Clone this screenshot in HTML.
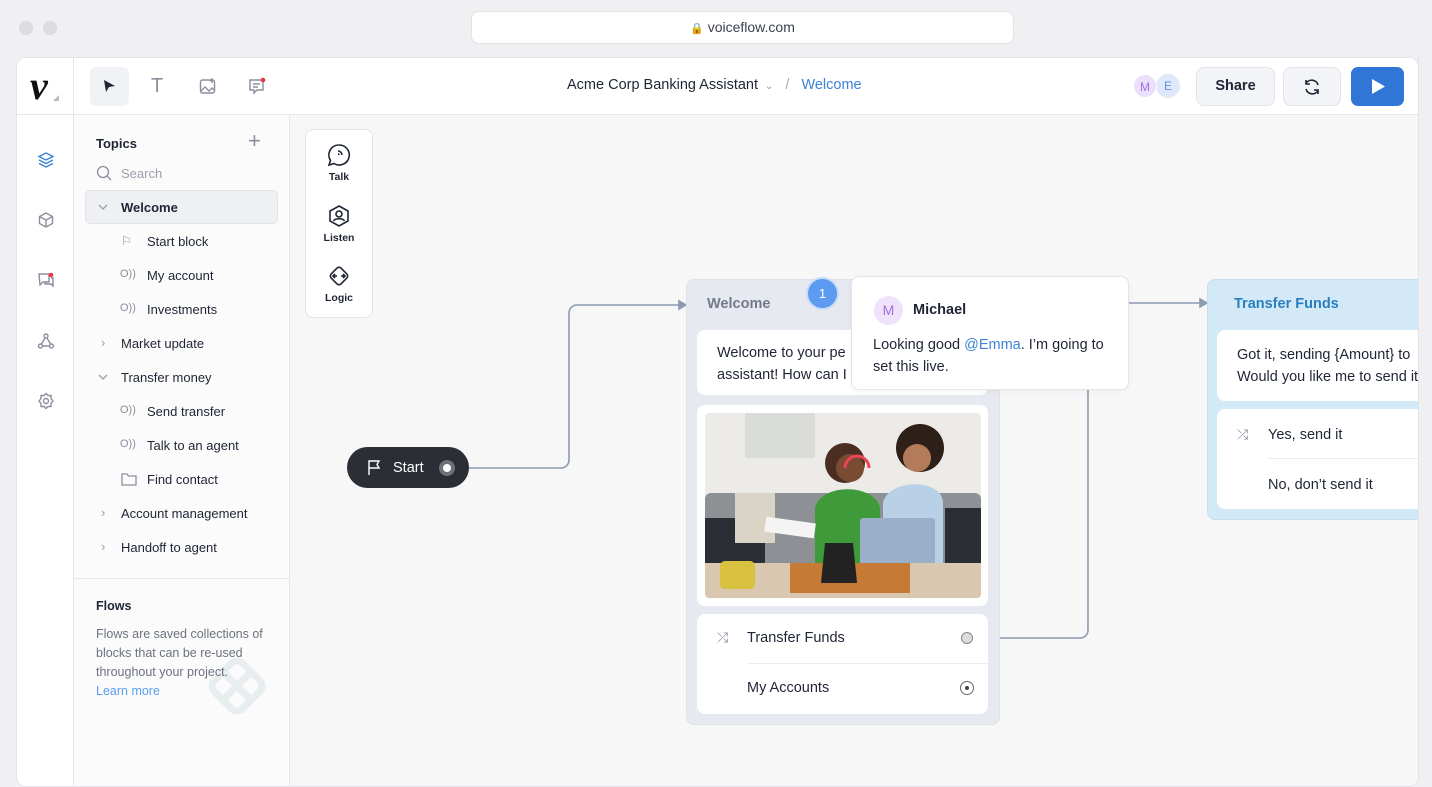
<!DOCTYPE html>
<html><head><meta charset="utf-8"><style>
*{box-sizing:border-box;margin:0;padding:0}
body{width:1432px;height:771px;overflow:hidden;background:#f0f0f3;font-family:"Liberation Sans",sans-serif;color:#1f2535;position:relative}
.abs{position:absolute}
.url{left:471px;top:11px;width:543px;height:33px;background:#fff;border:1px solid #e2e3e8;border-radius:8px;text-align:center;font-size:14px;line-height:31px;color:#3d4250}
.win{left:16px;top:57px;width:1403px;height:730px;background:#f7f7f8;border:1px solid #e4e5ea;border-radius:10px;overflow:hidden}
.hdr{left:0;top:0;width:1403px;height:57px;background:#fff;border-bottom:1px solid #e6e7ec}
.rail{left:0;top:57px;width:57px;height:700px;background:#fff;border-right:1px solid #e6e7ec}
.side{left:57px;top:57px;width:216px;height:700px;background:#fbfbfc;border-right:1px solid #e6e7ec}
.si{position:absolute;font-size:13px;color:#1f2535}
.card{background:#fff;border-radius:8px;position:absolute}
.t14{font-size:14.5px;line-height:22px;color:#1f2535}
</style></head><body>
<div class="abs" style="left:19px;top:21px;width:14px;height:14px;border-radius:50%;background:#dcdde2"></div>
<div class="abs" style="left:43px;top:21px;width:14px;height:14px;border-radius:50%;background:#dcdde2"></div>
<div class="abs url"><span style="font-size:11px;color:#888">🔒</span> voiceflow.com</div>
<div class="abs win">
 <div class="abs hdr">
  <div class="abs" style="left:13px;top:4px;font-family:'Liberation Serif',serif;font-style:italic;font-weight:bold;font-size:40px;color:#111">v</div>
  <div class="abs" style="left:36px;top:37px;width:0;height:0;border-left:6px solid transparent;border-bottom:6px solid #bbb"></div>
  <div class="abs" style="left:56px;top:0;width:1px;height:57px;background:#e6e7ec"></div>
  <div class="abs" style="left:73px;top:9px;width:39px;height:39px;border-radius:6px;background:#f1f2f5"></div>
  <svg class="abs" style="left:84px;top:20px" width="16" height="16"><path d="M3 2L14 8L8 9L5 14Z" fill="#1f2535"/></svg>
  <div class="abs" style="left:134px;top:17px;font-size:20px;color:#8a8f9c">T</div>
  <svg class="abs" style="left:182px;top:19px" width="18" height="18" fill="none" stroke="#8a8f9c" stroke-width="1.4"><rect x="1.5" y="3" width="14" height="13" rx="2"/><path d="M2 14l4-4 4 4 3-3 3 3"/><path d="M13 1v5M10.5 3.5h5"/></svg>
  <svg class="abs" style="left:231px;top:19px" width="18" height="18" fill="none" stroke="#8a8f9c" stroke-width="1.4"><path d="M2 3h13v10H9l-3 3v-3H2z"/><path d="M5 7h7M5 10h5"/><circle cx="15" cy="3" r="2.3" fill="#e8364f" stroke="none"/></svg>
  <div class="abs" style="left:550px;top:19px;font-size:14.5px;color:#1f2535">Acme Corp Banking Assistant <span style="color:#999;font-size:10px">&nbsp;⌄</span> &nbsp;&nbsp;<span style="color:#aab">/</span>&nbsp;&nbsp; <span style="color:#3c83d8">Welcome</span></div>
  <div class="abs" style="left:1139px;top:16px;width:24px;height:24px;border-radius:50%;background:#dfe9fb;color:#6a8fdc;font-size:12px;text-align:center;line-height:24px">E</div>
  <div class="abs" style="left:1116px;top:16px;width:24px;height:24px;border-radius:50%;background:#ecdffb;color:#a070e0;font-size:12px;text-align:center;line-height:24px;border:1px solid #fff">M</div>
  <div class="abs" style="left:1179px;top:9px;width:79px;height:39px;border-radius:8px;background:#f3f4f7;border:1px solid #e2e4ea;text-align:center;line-height:37px;font-size:14.5px;font-weight:bold;color:#1f2535">Share</div>
  <div class="abs" style="left:1266px;top:9px;width:58px;height:39px;border-radius:8px;background:#f3f4f7;border:1px solid #e2e4ea"></div>
  <svg class="abs" style="left:1285px;top:19px" width="20" height="20" fill="none" stroke="#1f2535" stroke-width="1.6"><path d="M16 8A6.5 6.5 0 0 0 4 6.5M4 12a6.5 6.5 0 0 0 12 1.5"/><path d="M4 3v4h4M16 17v-4h-4"/></svg>
  <div class="abs" style="left:1334px;top:9px;width:53px;height:39px;border-radius:7px;background:#2f76d6"></div>
  <svg class="abs" style="left:1353px;top:20px" width="16" height="17"><path d="M2 1L15 8.5L2 16Z" fill="#fff"/></svg>
 </div>
 <div class="abs rail">
  <svg class="abs" style="left:20px;top:36px" width="18" height="18" fill="none" stroke="#3c83d8" stroke-width="1.4"><path d="M9 2l7 3.5-7 3.5-7-3.5z"/><path d="M2 9l7 3.5L16 9M2 12.5l7 3.5 7-3.5"/></svg>
  <svg class="abs" style="left:20px;top:96px" width="18" height="18" fill="none" stroke="#8a8f9c" stroke-width="1.4"><path d="M9 2l6.5 3.5v7L9 16l-6.5-3.5v-7z"/><path d="M2.5 5.5L9 9l6.5-3.5M9 9v7"/></svg>
  <svg class="abs" style="left:20px;top:156px" width="18" height="18" fill="none" stroke="#8a8f9c" stroke-width="1.4"><path d="M2 3h10v8H6l-3 3z"/><path d="M14 7h2v8l-2-2H8v-2"/><circle cx="14" cy="4" r="2.3" fill="#e8364f" stroke="none"/></svg>
  <svg class="abs" style="left:20px;top:217px" width="18" height="18" fill="none" stroke="#8a8f9c" stroke-width="1.4"><circle cx="9" cy="4" r="2"/><circle cx="3.5" cy="14" r="2"/><circle cx="14.5" cy="14" r="2"/><path d="M8 6l-3.5 6M10 6l3.5 6M5.5 14h7"/></svg>
  <svg class="abs" style="left:20px;top:277px" width="18" height="18" fill="none" stroke="#8a8f9c" stroke-width="1.4"><circle cx="9" cy="9" r="2.5"/><path d="M9 1.5l2 2h3v3l2 2.5-2 2.5v3h-3l-2 2-2-2H4v-3l-2-2.5 2-2.5v-3h3z"/></svg>
 </div>
 <div class="abs side">
  <div class="si" style="left:22px;top:21px;font-weight:bold;font-size:13px">Topics</div>
  <div class="si" style="left:174px;top:13px;font-size:22px;color:#8a8f9c;font-weight:300">+</div>
  <svg class="abs" style="left:22px;top:50px" width="16" height="16" fill="none" stroke="#8a8f9c" stroke-width="1.3"><circle cx="7" cy="7" r="5.5"/><path d="M11 11l4 4"/></svg>
  <div class="si" style="left:47px;top:51px;color:#9a9fab">Search</div>
  <div class="abs" style="left:11px;top:75px;width:193px;height:34px;border-radius:5px;background:#eef0f4;border:1px solid #e1e4ea"></div>
  <svg class="abs" style="left:24px;top:88px" width="10" height="8" fill="none" stroke="#9a9fab" stroke-width="1.3"><path d="M1 2l4 4 4-4"/></svg>
  <div class="si" style="left:47px;top:85px;font-weight:bold">Welcome</div>
  <div class="si" style="left:47px;top:119px;color:#8a8f9c;font-size:12px">⚐</div><div class="si" style="left:73px;top:119px">Start block</div>
  <div class="si" style="left:46px;top:153px;color:#8a8f9c;font-size:11px">O))</div><div class="si" style="left:73px;top:153px">My account</div>
  <div class="si" style="left:46px;top:187px;color:#8a8f9c;font-size:11px">O))</div><div class="si" style="left:73px;top:187px">Investments</div>
  <div class="si" style="left:27px;top:220px;color:#9a9fab">›</div><div class="si" style="left:47px;top:221px">Market update</div>
  <svg class="abs" style="left:24px;top:258px" width="10" height="8" fill="none" stroke="#9a9fab" stroke-width="1.3"><path d="M1 2l4 4 4-4"/></svg><div class="si" style="left:47px;top:255px">Transfer money</div>
  <div class="si" style="left:46px;top:289px;color:#8a8f9c;font-size:11px">O))</div><div class="si" style="left:73px;top:289px">Send transfer</div>
  <div class="si" style="left:46px;top:323px;color:#8a8f9c;font-size:11px">O))</div><div class="si" style="left:73px;top:323px">Talk to an agent</div>
  <svg class="abs" style="left:47px;top:357px" width="16" height="14" fill="none" stroke="#8a8f9c" stroke-width="1.3"><path d="M1 2h5l1.5 2H15v9H1z"/></svg><div class="si" style="left:73px;top:357px">Find contact</div>
  <div class="si" style="left:27px;top:390px;color:#9a9fab">›</div><div class="si" style="left:47px;top:391px">Account management</div>
  <div class="si" style="left:27px;top:424px;color:#9a9fab">›</div><div class="si" style="left:47px;top:425px">Handoff to agent</div>
  <div class="abs" style="left:0;top:463px;width:216px;height:1px;background:#e6e7ec"></div>
  <svg class="abs" style="left:127px;top:535px" width="72" height="72" fill="none" stroke="#e8eef0" stroke-width="7"><rect x="16" y="16" width="40" height="40" rx="8" transform="rotate(45 36 36)"/><path d="M22 22l28 28M50 22L22 50"/></svg>
  <div class="si" style="left:22px;top:484px;font-weight:bold;font-size:12.5px">Flows</div>
  <div class="si" style="left:22px;top:510px;font-size:12.5px;line-height:19px;color:#6c7280;width:180px">Flows are saved collections of blocks that can be re-used throughout your project.<br><span style="color:#5b9cf0">Learn more</span></div>
 </div>
</div>
<div class="abs" style="left:1418px;top:57px;width:14px;height:714px;background:#f0f0f3;border-left:1px solid #e4e5ea"></div>
<div class="abs card" style="left:305px;top:129px;width:68px;height:189px;border:1px solid #e4e5ea"></div>
<svg class="abs" style="left:327px;top:143px" width="24" height="24" fill="none" stroke="#1f2535" stroke-width="1.6"><path d="M12 2a10 10 0 1 1-5 18.5L2 22l1.5-4.5A10 10 0 0 1 12 2z"/><path d="M11 8a4 4 0 0 1 4 4M11 11a1 1 0 0 1 1 1"/></svg>
<div class="abs" style="left:305px;top:171px;width:68px;text-align:center;font-size:10.5px;font-weight:bold">Talk</div>
<svg class="abs" style="left:327px;top:204px" width="24" height="24" fill="none" stroke="#1f2535" stroke-width="1.6"><path d="M12 2l9 5v10l-9 5-9-5V7z"/><circle cx="12" cy="10" r="3"/><path d="M6.5 17c1.5-3 9.5-3 11 0"/></svg>
<div class="abs" style="left:305px;top:232px;width:68px;text-align:center;font-size:10.5px;font-weight:bold">Listen</div>
<svg class="abs" style="left:327px;top:264px" width="24" height="24" fill="none" stroke="#1f2535" stroke-width="1.6"><rect x="5" y="5" width="14" height="14" rx="3" transform="rotate(45 12 12)"/><path d="M6 12h4M8 10l-2 2 2 2M18 12h-4M16 10l2 2-2 2"/></svg>
<div class="abs" style="left:305px;top:292px;width:68px;text-align:center;font-size:10.5px;font-weight:bold">Logic</div>
<svg class="abs" style="left:460px;top:290px" width="760" height="360" fill="none" stroke="#8c9bb0" stroke-width="1.6"><path d="M9 178h92a8 8 0 0 0 8-8V23a8 8 0 0 1 8-8h108"/><path d="M219 11l7 4-7 4z" fill="#8c9bb0"/><path d="M540 348h80a8 8 0 0 0 8-8V99"/><path d="M668 13h72"/><path d="M740 9l7 4-7 4z" fill="#8c9bb0"/></svg>
<div class="abs" style="left:347px;top:447px;width:122px;height:41px;border-radius:21px;background:#2b2e35"></div>
<svg class="abs" style="left:367px;top:459px" width="16" height="17" fill="none" stroke="#fff" stroke-width="1.4"><path d="M2 16V2h10l-2 3.5 2 3.5H2"/></svg>
<div class="abs" style="left:393px;top:460px;color:#fff;font-size:14.5px">Start</div>
<div class="abs" style="left:439px;top:460px;width:16px;height:16px;border-radius:50%;background:#6e7179"></div>
<div class="abs" style="left:443px;top:464px;width:8px;height:8px;border-radius:50%;background:#fff;border:2px solid #fff"></div>
<div class="abs" style="left:686px;top:279px;width:314px;height:446px;border-radius:8px;background:#e6e9ef;border:1px solid #dde1e8"></div>
<div class="abs" style="left:707px;top:296px;font-size:14.5px;color:#5e6677;font-weight:bold;opacity:.85">Welcome</div>
<div class="abs card" style="left:697px;top:330px;width:291px;height:65px"></div>
<div class="abs t14" style="left:717px;top:342px">Welcome to your pe<br>assistant! How can I</div>
<div class="abs card" style="left:697px;top:405px;width:291px;height:201px"></div>
<svg class="abs" style="left:705px;top:413px;border-radius:4px" width="276" height="185">
<rect width="276" height="185" fill="#ecebe8"/><rect x="40" y="0" width="70" height="45" fill="#d9dcd8"/>
<rect x="0" y="80" width="276" height="75" rx="6" fill="#8d9196"/><rect x="0" y="105" width="60" height="55" fill="#2a2d33"/><rect x="240" y="95" width="36" height="55" fill="#2a2d33"/>
<rect x="30" y="80" width="40" height="50" fill="#d9d4c6"/>
<path d="M110 95c5-25 60-25 65 0v60h-65z" fill="#3f9b3a"/><circle cx="140" cy="50" r="20" fill="#4a2e22"/><circle cx="145" cy="55" r="14" fill="#7a4a32"/>
<path d="M178 90c5-25 60-25 60 0v70h-60z" fill="#b9d1e6"/><circle cx="215" cy="35" r="24" fill="#2e1f18"/><circle cx="212" cy="45" r="14" fill="#b47b5b"/>
<rect x="155" y="105" width="75" height="55" rx="3" fill="#9ab0c8"/><rect x="60" y="107" width="50" height="15" fill="#f4f4f4" transform="rotate(8 85 115)"/>
<rect x="180" y="160" width="45" height="20" fill="#7f9cc0"/>
<rect x="0" y="150" width="276" height="35" fill="#d9c7b0"/><rect x="85" y="150" width="120" height="30" fill="#c57a35"/><path d="M120 130h28l4 40h-36z" fill="#222"/><rect x="15" y="148" width="35" height="28" rx="5" fill="#d7c13e"/>
<path d="M140 55a12 12 0 0 1 24 0" stroke="#e45" stroke-width="3" fill="none"/></svg>
<div class="abs card" style="left:697px;top:614px;width:291px;height:100px"></div>
<div class="abs" style="left:747px;top:663px;width:241px;height:1px;background:#eceef2"></div>
<div class="abs" style="left:717px;top:629px;color:#8a8f9c;font-size:14px">⤮</div>
<div class="abs t14" style="left:747px;top:627px">Transfer Funds</div>
<div class="abs t14" style="left:747px;top:677px">My Accounts</div>
<div class="abs" style="left:961px;top:632px;width:12px;height:12px;border-radius:50%;background:#ddd;border:1px solid #888"></div>
<div class="abs" style="left:960px;top:681px;width:14px;height:14px;border-radius:50%;border:1.3px solid #666"></div>
<div class="abs" style="left:965px;top:686px;width:4px;height:4px;border-radius:50%;background:#444"></div>
<div class="abs" style="left:806px;top:277px;width:33px;height:33px;border-radius:50%;background:#5c9bf0;border:2px solid #c7dcf9;color:#fff;text-align:center;line-height:29px;font-size:13px">1</div>
<div class="abs card" style="left:851px;top:276px;width:278px;height:114px;border:1px solid #e4e5ea;box-shadow:0 2px 6px rgba(0,0,0,.04)"></div>
<div class="abs" style="left:874px;top:296px;width:29px;height:29px;border-radius:50%;background:#efe2fb;color:#a070e0;text-align:center;line-height:29px;font-size:14px">M</div>
<div class="abs" style="left:913px;top:302px;font-size:14.5px;font-weight:bold">Michael</div>
<div class="abs t14" style="left:873px;top:334px">Looking good <span style="color:#3c83d8">@Emma</span>. I’m going to<br>set this live.</div>
<div class="abs" style="left:1207px;top:279px;width:211px;height:241px;border-radius:8px 0 0 8px;background:#d3e9f7;border:1px solid #c6dff0;border-right:none"></div>
<div class="abs" style="left:1234px;top:296px;font-size:14.5px;font-weight:bold;color:#2a7fc0">Transfer Funds</div>
<div class="abs" style="left:1217px;top:330px;width:201px;height:71px;background:#fff;border-radius:8px 0 0 8px"></div>
<div class="abs t14" style="left:1237px;top:344px;white-space:nowrap;width:181px;overflow:hidden">Got it, sending {Amount} to<br>Would you like me to send it</div>
<div class="abs" style="left:1217px;top:409px;width:201px;height:100px;background:#fff;border-radius:8px 0 0 8px"></div>
<div class="abs" style="left:1268px;top:458px;width:150px;height:1px;background:#eceef2"></div>
<div class="abs" style="left:1237px;top:426px;color:#8a8f9c;font-size:14px">⤮</div>
<div class="abs t14" style="left:1268px;top:424px">Yes, send it</div>
<div class="abs t14" style="left:1268px;top:474px">No, don’t send it</div>
</body></html>
